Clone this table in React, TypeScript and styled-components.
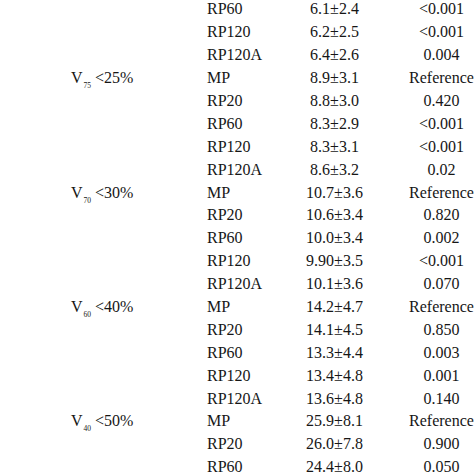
import React from 'react'
import styled, { createGlobalStyle } from 'styled-components'

const GlobalStyle = createGlobalStyle`
  body {
    margin: 0;
    background: #ffffff;
  }
`

const Viewport = styled.div`
  width: 474px;
  height: 474px;
  overflow: hidden;
  background: #ffffff;
  color: #161616;
  font-family: "Liberation Serif", "Times New Roman", serif;
  font-size: 16px;
`

const Table = styled.div`
  display: grid;
  grid-template-columns: 207px 73px 109px 105px;
  grid-auto-rows: 22.9px;
  line-height: 22.9px;
  width: 494px;
  margin-top: -1.6px;
`

const Cell = styled.div`
  white-space: nowrap;
`

const GroupLabel = styled(Cell)`
  padding-left: 71px;
`

const Protocol = styled(Cell)`
  text-align: left;
`

const Centered = styled(Cell)`
  text-align: center;
`

const Sub = styled.sub`
  font-size: 7.5px;
  line-height: 0;
  vertical-align: -5px;
  margin-left: 1px;
`

type Row = [string, string, string]
type Group = { dose?: string; limit?: string; rows: Row[] }

const groups: Group[] = [
  {
    rows: [
      ['RP60', '6.1±2.4', '<0.001'],
      ['RP120', '6.2±2.5', '<0.001'],
      ['RP120A', '6.4±2.6', '0.004'],
    ],
  },
  {
    dose: '75',
    limit: '<25%',
    rows: [
      ['MP', '8.9±3.1', 'Reference'],
      ['RP20', '8.8±3.0', '0.420'],
      ['RP60', '8.3±2.9', '<0.001'],
      ['RP120', '8.3±3.1', '<0.001'],
      ['RP120A', '8.6±3.2', '0.02'],
    ],
  },
  {
    dose: '70',
    limit: '<30%',
    rows: [
      ['MP', '10.7±3.6', 'Reference'],
      ['RP20', '10.6±3.4', '0.820'],
      ['RP60', '10.0±3.4', '0.002'],
      ['RP120', '9.90±3.5', '<0.001'],
      ['RP120A', '10.1±3.6', '0.070'],
    ],
  },
  {
    dose: '60',
    limit: '<40%',
    rows: [
      ['MP', '14.2±4.7', 'Reference'],
      ['RP20', '14.1±4.5', '0.850'],
      ['RP60', '13.3±4.4', '0.003'],
      ['RP120', '13.4±4.8', '0.001'],
      ['RP120A', '13.6±4.8', '0.140'],
    ],
  },
  {
    dose: '40',
    limit: '<50%',
    rows: [
      ['MP', '25.9±8.1', 'Reference'],
      ['RP20', '26.0±7.8', '0.900'],
      ['RP60', '24.4±8.0', '0.050'],
    ],
  },
]

const App = () => {
  return (
    <Viewport>
      <GlobalStyle />
      <Table>
        {groups.map((group, gi) =>
          group.rows.map(([plan, mean, p], ri) => (
            <React.Fragment key={`${gi}-${ri}`}>
              <GroupLabel>
                {ri === 0 && group.dose ? (
                  <>
                    V<Sub>{group.dose}</Sub> {group.limit}
                  </>
                ) : null}
              </GroupLabel>
              <Protocol>{plan}</Protocol>
              <Centered>{mean}</Centered>
              <Centered>{p}</Centered>
            </React.Fragment>
          ))
        )}
      </Table>
    </Viewport>
  )
}

export default App
